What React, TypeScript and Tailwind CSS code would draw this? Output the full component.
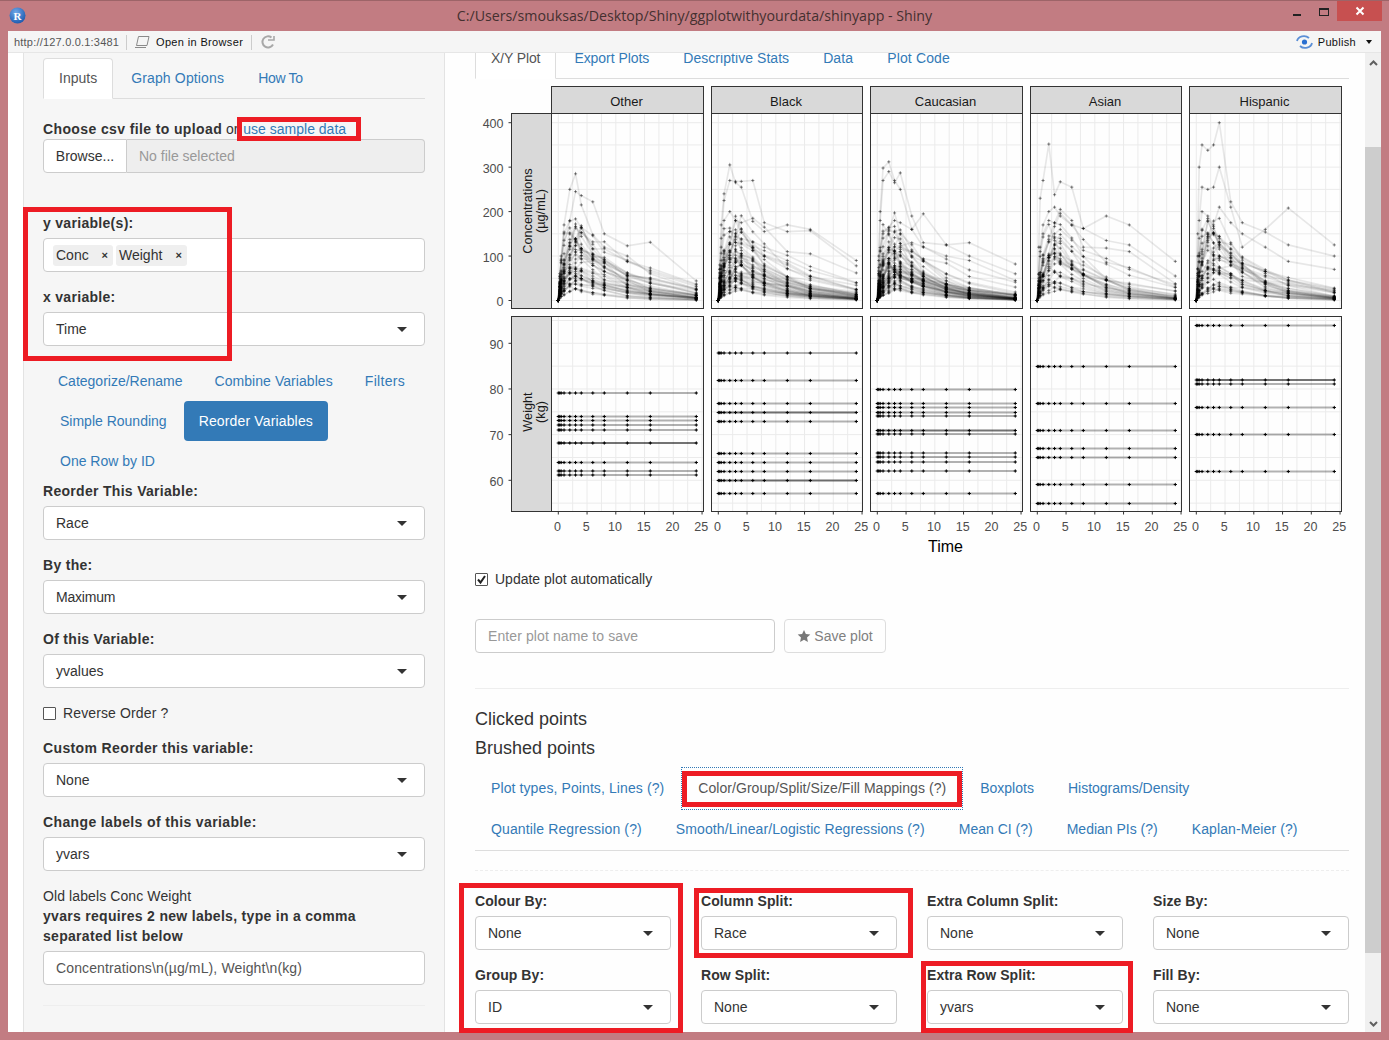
import React, { useMemo } from "react";

const T = [0, 0.25, 0.5, 1, 2, 3, 4, 6, 8, 12, 16, 24];

type PanelDef = {
  name: string;
  left: number;
  right: number;
  x0: number;
  n: number;
  seed: number;
  outliers: number[][];
  weights: [number, boolean][];
};

const PANELS: PanelDef[] = [
  {
    name: "Other", left: 551.5, right: 703.5, x0: 558.3, n: 38, seed: 11,
    outliers: [
      [0, 50, 100, 170, 250, 285, 215, 148, 120, 100, 60, 25],
      [0, 40, 90, 150, 180, 245, 236, 222, 150, 123, 131, 44],
    ],
    weights: [[393, false], [416.5, false], [420.5, false], [425, false], [430, false], [443, true], [462.5, false], [471, false], [475, false]],
  },
  {
    name: "Black", left: 711.5, right: 862.5, x0: 718.3, n: 46, seed: 23,
    outliers: [
      [0, 80, 170, 240, 305, 265, 255, 178, 155, 170, 160, 90],
      [0, 70, 140, 225, 270, 268, 268, 270, 175, 155, 157, 78],
      [0, 60, 120, 180, 200, 180, 175, 185, 165, 110, 105, 62],
    ],
    weights: [[353, false], [380.5, false], [403.5, false], [412.5, true], [421.5, false], [453.5, false], [462.5, false], [471.5, false], [480.5, true], [493.5, false]],
  },
  {
    name: "Caucasian", left: 870.5, right: 1022.5, x0: 877.3, n: 52, seed: 37,
    outliers: [
      [0, 100, 200, 298, 312, 270, 250, 160, 120, 100, 90, 45],
      [0, 90, 180, 270, 290, 265, 287, 190, 130, 125, 130, 82],
      [0, 60, 110, 150, 165, 180, 175, 160, 195, 125, 100, 60],
    ],
    weights: [[389.5, false], [403.5, false], [407.5, false], [412.5, false], [416, false], [430.5, true], [434, false], [453, false], [457, false], [462, false], [471, false], [493.5, false]],
  },
  {
    name: "Asian", left: 1030.5, right: 1181.5, x0: 1037.3, n: 28, seed: 41,
    outliers: [
      [0, 120, 230, 270, 352, 238, 267, 255, 162, 135, 125, 55],
      [0, 60, 120, 170, 200, 210, 190, 170, 162, 190, 170, 88],
      [0, 50, 110, 150, 180, 175, 205, 180, 120, 118, 110, 38],
    ],
    weights: [[366.5, false], [403.5, false], [430.5, false], [448.5, false], [457.5, false], [484.5, false], [503.5, false]],
  },
  {
    name: "Hispanic", left: 1189.5, right: 1341.5, x0: 1196.3, n: 32, seed: 59,
    outliers: [
      [0, 150, 300, 350, 338, 350, 400, 222, 175, 154, 125, 100],
      [0, 100, 180, 255, 250, 255, 300, 210, 120, 160, 208, 125],
      [0, 70, 140, 200, 190, 170, 210, 175, 150, 120, 88, 70],
    ],
    weights: [[325.5, false], [380, true], [384, false], [407.5, false], [434.5, false], [471.5, false]],
  },
];

function rng(seed: number) {
  let s = seed * 99991;
  return () => {
    s = (s + 0x6d2b79f5) | 0;
    let t = Math.imul(s ^ (s >>> 15), 1 | s);
    t = (t + Math.imul(t ^ (t >>> 7), 61 | t)) ^ t;
    return ((t ^ (t >>> 14)) >>> 0) / 4294967296;
  };
}

const yConc = (v: number) => 300.5 - v * 0.4445;

function curves(p: PanelDef) {
  const r = rng(p.seed);
  const out: number[][] = [...p.outliers];
  for (let i = 0; i < p.n; i++) {
    const peak = 25 + Math.pow(r(), 1.2) * 165;
    const tmax = 1 + r() * 3.5;
    const k = 0.06 + r() * 0.11;
    const c = T.map((t) => {
      if (t === 0) return 0;
      const rise = t < tmax ? Math.pow(t / tmax, 0.6) : Math.exp(-k * (t - tmax));
      return peak * rise * (0.88 + r() * 0.24);
    });
    out.push(c);
  }
  return out;
}

function Plot() {
  const data = useMemo(() => PANELS.map(curves), []);
  const xTicks = [0, 5, 10, 15, 20, 25];
  const gridStroke = "#ebebeb";
  const rows = [
    { top: 113.5, bottom: 308.5 },
    { top: 316.5, bottom: 511.5 },
  ];
  const concMajor = [0, 100, 200, 300, 400];
  const concAll = [0, 50, 100, 150, 200, 250, 300, 350, 400];
  const wY = (w: number) => 343.3 + (90 - w) * 4.567;
  const weightAll = [55, 60, 65, 70, 75, 80, 85, 90, 95];
  const weightMajor = [60, 70, 80, 90];
  const plus = (x: number, y: number) => `M${x - 1.6} ${y}h3.2M${x} ${y - 1.6}v3.2`;

  return (
    <svg viewBox="475 85 874 475" width={874} height={475} className="block" fontFamily="'Liberation Sans', sans-serif">
      {/* left strips */}
      {rows.map((r, i) => (
        <rect key={i} x={511.5} y={r.top} width={40} height={r.bottom - r.top} fill="#d9d9d9" stroke="#333" strokeWidth={1} />
      ))}
      <text transform="translate(532 211) rotate(-90)" textAnchor="middle" fontSize={12.7} fill="#1a1a1a">
        <tspan x={0} y={0}>Concentrations</tspan>
        <tspan x={0} y={13}>(µg/mL)</tspan>
      </text>
      <text transform="translate(532 412) rotate(-90)" textAnchor="middle" fontSize={12.7} fill="#1a1a1a">
        <tspan x={0} y={0}>Weight</tspan>
        <tspan x={0} y={13}>(kg)</tspan>
      </text>
      {/* y ticks */}
      {concMajor.map((v) => (
        <g key={v}>
          <line x1={508.5} x2={511} y1={yConc(v)} y2={yConc(v)} stroke="#333" />
          <text x={503.5} y={yConc(v) + 5.5} textAnchor="end" fontSize={12.5} fill="#4d4d4d">{v}</text>
        </g>
      ))}
      {weightMajor.map((v) => (
        <g key={v}>
          <line x1={508.5} x2={511} y1={wY(v)} y2={wY(v)} stroke="#333" />
          <text x={503.5} y={wY(v) + 5.5} textAnchor="end" fontSize={12.5} fill="#4d4d4d">{v}</text>
        </g>
      ))}
      {PANELS.map((p, pi) => {
        const sx = (t: number) => p.x0 + t * 5.75;
        const grid = [0, 2.5, 5, 7.5, 10, 12.5, 15, 17.5, 20, 22.5, 25].filter((t) => sx(t) < p.right);
        const lines = data[pi];
        const pointPath = lines
          .map((c) => c.map((v, i) => plus(sx(T[i]), yConc(v))).join(""))
          .join("");
        return (
          <g key={p.name}>
            {/* top strip */}
            <rect x={p.left} y={86.5} width={p.right - p.left} height={27} fill="#d9d9d9" stroke="#333" />
            <text x={(p.left + p.right) / 2 - 1} y={105.5} textAnchor="middle" fontSize={13} fill="#1a1a1a">{p.name}</text>
            {/* grid row 1 */}
            {grid.map((t) => (
              <line key={t} x1={sx(t)} x2={sx(t)} y1={rows[0].top} y2={rows[0].bottom} stroke={gridStroke} />
            ))}
            {concAll.map((v) => (
              <line key={v} x1={p.left} x2={p.right} y1={yConc(v)} y2={yConc(v)} stroke={gridStroke} />
            ))}
            {lines.map((c, i) => (
              <polyline
                key={i}
                points={c.map((v, j) => `${sx(T[j])},${yConc(v)}`).join(" ")}
                fill="none"
                stroke="#000"
                strokeOpacity={0.09}
                strokeWidth={1.7}
              />
            ))}
            <path d={pointPath} stroke="#000" strokeOpacity={0.55} strokeWidth={0.8} fill="none" />
            <rect x={p.left} y={rows[0].top} width={p.right - p.left} height={rows[0].bottom - rows[0].top} fill="none" stroke="#333" />
            {/* grid row 2 */}
            {grid.map((t) => (
              <line key={t} x1={sx(t)} x2={sx(t)} y1={rows[1].top} y2={rows[1].bottom} stroke={gridStroke} />
            ))}
            {weightAll.map((v) => (
              <line key={v} x1={p.left} x2={p.right} y1={wY(v)} y2={wY(v)} stroke={gridStroke} />
            ))}
            {p.weights.map(([y, dark], i) => (
              <g key={i}>
                <line x1={sx(0)} x2={sx(24)} y1={y} y2={y} stroke="#000" strokeOpacity={dark ? 0.55 : 0.3} strokeWidth={2} />
                <path d={T.map((t) => plus(sx(t), y)).join("")} stroke="#000" strokeWidth={1} fill="none" />
              </g>
            ))}
            <rect x={p.left} y={rows[1].top} width={p.right - p.left} height={rows[1].bottom - rows[1].top} fill="none" stroke="#333" />
            {/* x ticks */}
            {xTicks.map((t) => (
              <g key={t}>
                <line x1={sx(t)} x2={sx(t)} y1={511.5} y2={514.5} stroke="#333" />
                <text x={sx(t) - 0.8} y={530.5} textAnchor="middle" fontSize={12.5} fill="#4d4d4d">{t}</text>
              </g>
            ))}
          </g>
        );
      })}
      <text x={945.5} y={552} textAnchor="middle" fontSize={16} fill="#000">Time</text>
    </svg>
  );
}

function Caret() {
  return <span className="w-0 h-0 border-x-[5.5px] border-x-transparent border-t-[5.5px] border-t-[#333]" />;
}

function Select({ value, valueClass = "" }: { value: string; valueClass?: string }) {
  return (
    <div className="h-[34px] bg-white border border-[#ccc] rounded-[4px] flex items-center justify-between pl-[12px] pr-[17px] text-[#333] text-[14px]">
      <span className={valueClass}>{value}</span>
      <Caret />
    </div>
  );
}

function Label({ children, labelClass = "tracking-[0.3px]" }: { children: React.ReactNode; labelClass?: string }) {
  return <div className={"h-[20px] leading-[20px] mb-[5px] font-bold text-[#333] text-[14px] whitespace-nowrap " + labelClass}>{children}</div>;
}

function Field({ label, value, labelClass, valueClass }: { label: string; value: string; labelClass?: string; valueClass?: string }) {
  return (
    <div className="mb-[15px]">
      <Label labelClass={labelClass}>{label}</Label>
      <Select value={value} valueClass={valueClass} />
    </div>
  );
}

function Tab({ children, active, outline, className = "" }: { children: React.ReactNode; active?: boolean; outline?: boolean; className?: string }) {
  return (
    <div
      className={
        "h-[41px] mr-[2px] px-[15px] border leading-[39px] whitespace-nowrap text-[14px] " +
        (active ? "border-[#ddd] border-b-white bg-white text-[#555] rounded-t-[4px] " : "border-transparent text-[#337ab7] ") +
        (outline ? "outline outline-1 outline-dotted outline-[#337ab7] " : "") +
        className
      }
    >
      {children}
    </div>
  );
}

function Pill({ children, active, className = "" }: { children: React.ReactNode; active?: boolean; className?: string }) {
  return (
    <div
      className={
        "h-[40px] px-[15px] leading-[40px] rounded-[4px] whitespace-nowrap text-[14px] [&:not(:first-child)]:ml-[2px] " +
        (active ? "bg-[#337ab7] text-white " : "text-[#337ab7] ") +
        className
      }
    >
      {children}
    </div>
  );
}

function Box({ className }: { className: string }) {
  return <div className={"absolute border-[5px] border-[#ed1c24] pointer-events-none " + className} />;
}

function Chip({ text, wClass }: { text: string; wClass: string }) {
  return (
    <span className={"h-[21px] bg-[#efefef] rounded-[3px] pl-[3px] flex items-center justify-between pr-[5px] text-[#333] " + wClass}>
      <span>{text}</span>
      <span className="text-[11px] font-bold leading-none">×</span>
    </span>
  );
}

function Sidebar() {
  return (
    <aside className="w-[422px] h-full shrink-0 bg-[#f6f6f6] border-x border-[#e3e3e3] px-[19px] pt-[5px] overflow-hidden">
      <div className="flex border-b border-[#ddd] h-[41px]">
        <Tab active>Inputs</Tab>
        <Tab className="tracking-[0.15px]">Graph Options</Tab>
        <Tab className="tracking-[-0.3px]">How To</Tab>
      </div>
      <div className="mt-[20px] h-[20px] leading-[20px] text-[14px] whitespace-nowrap">
        <span className="font-bold text-[#333] tracking-[0.38px]">Choose csv file to upload</span>
        <span className="text-[#333]"> or </span>
        <span className="text-[#337ab7] ml-[1px]">use sample data</span>
      </div>
      <div className="h-[34px] flex text-[14px]">
        <div className="w-[84px] bg-white border border-[#ccc] rounded-l-[4px] flex items-center justify-center text-[#333]">Browse...</div>
        <div className="flex-1 bg-[#eee] border border-l-0 border-[#ccc] rounded-r-[4px] flex items-center pl-[12px] text-[#999]">No file selected</div>
      </div>
      <div className="mt-[40px] mb-[15px]">
        <Label>y variable(s):</Label>
        <div className="h-[34px] bg-white border border-[#ccc] rounded-[4px] flex items-center gap-[3px] pl-[9px] text-[14px]">
          <Chip text="Conc" wClass="w-[60px]" />
          <Chip text="Weight" wClass="w-[71px]" />
        </div>
      </div>
      <Field label="x variable:" value="Time" />
      <div className="flex flex-wrap">
        <Pill>Categorize/Rename</Pill>
        <Pill className="tracking-[0.06px]">Combine Variables</Pill>
        <Pill className="tracking-[0.3px]">Filters</Pill>
        <Pill>Simple Rounding</Pill>
        <Pill active className="tracking-[0.15px]">Reorder Variables</Pill>
        <Pill>One Row by ID</Pill>
      </div>
      <Field label="Reorder This Variable:" value="Race" />
      <Field label="By the:" value="Maximum" valueClass="tracking-[-0.2px]" />
      <Field label="Of this Variable:" value="yvalues" />
      <div className="h-[20px] flex items-center gap-[7px] text-[14px] text-[#333] mb-[15px]">
        <span className="w-[13px] h-[13px] bg-white border border-[#555] rounded-[1px]" />
        <span className="tracking-[0.13px]">Reverse Order ?</span>
      </div>
      <Field label="Custom Reorder this variable:" value="None" labelClass="tracking-[0.37px]" />
      <Field label="Change labels of this variable:" value="yvars" labelClass="tracking-[0.37px]" />
      <div className="text-[14px] leading-[20px] text-[#333] tracking-[0.1px]">Old labels Conc Weight</div>
      <div className="text-[14px] leading-[20px] text-[#333] font-bold tracking-[0.3px] mb-[5px]">
        yvars requires 2 new labels, type in a comma
        <br />
        separated list below
      </div>
      <div className="h-[34px] bg-white border border-[#ccc] rounded-[4px] flex items-center pl-[12px] text-[14px] text-[#555] tracking-[0.13px]">
        Concentrations\n(µg/mL), Weight\n(kg)
      </div>
      <div className="mt-[20px] border-t border-[#eee]" />
    </aside>
  );
}

function Main() {
  const lc = "tracking-[0.08px]";
  return (
    <main className="flex-1 min-w-0 h-full overflow-hidden bg-[#fefefe] pl-[30px] pr-[16px]">
      <div className="-mt-[15px]">
        <div className="flex border-b border-[#ddd] h-[41px]">
          <Tab active className="tracking-[-0.12px]">X/Y Plot</Tab>
          <Tab className="tracking-[-0.05px]">Export Plots</Tab>
          <Tab className="tracking-[0.05px]">Descriptive Stats</Tab>
          <Tab className="tracking-[0.1px]">Data</Tab>
          <Tab className="tracking-[0.15px]">Plot Code</Tab>
        </div>
        <div className="mt-[6px]">
          <Plot />
        </div>
        <div className="mt-[9px] h-[20px] flex items-center gap-[7px] text-[14px] text-[#333]">
          <span className="w-[13px] h-[13px] bg-white border border-[#555] rounded-[1px] flex items-center justify-center">
            <svg width="11" height="11" viewBox="0 0 11 11">
              <path d="M2 5.5 L4.5 8.5 L9 2" fill="none" stroke="#222" strokeWidth="2" />
            </svg>
          </span>
          <span>Update plot automatically</span>
        </div>
        <div className="mt-[30px] flex gap-[9px] text-[14px]">
          <div className="w-[300px] h-[34px] bg-white border border-[#ccc] rounded-[4px] flex items-center pl-[12px] text-[#999] tracking-[0.1px]">Enter plot name to save</div>
          <div className="w-[102px] h-[34px] border border-[#ddd] rounded-[4px] flex items-center justify-center gap-[3px] text-[#808080]">
            <svg width="14" height="14" viewBox="0 0 24 24" fill="#777">
              <path d="M12 1.5l3.2 7 7.6.9-5.6 5.2 1.5 7.6L12 18.4l-6.7 3.8 1.5-7.6L1.2 9.4l7.6-.9z" />
            </svg>
            <span>Save plot</span>
          </div>
        </div>
        <div className="mt-[35px] border-t border-[#eee]" />
        <div className="mt-[20px] h-[20px] leading-[20px] text-[18px] text-[#333]">Clicked points</div>
        <div className="mt-[9px] h-[20px] leading-[20px] text-[18px] text-[#333]">Brushed points</div>
        <div className="mt-[10px] flex flex-wrap border-b border-[#ddd] h-[83px]">
          <Tab className="tracking-[0.1px]">Plot types, Points, Lines (?)</Tab>
          <Tab outline className="tracking-[0.05px]">
            <span className="text-[#555]">Color/Group/Split/Size/Fill Mappings (?)</span>
          </Tab>
          <Tab>Boxplots</Tab>
          <Tab>Histograms/Density</Tab>
          <Tab className="tracking-[0.13px]">Quantile Regression (?)</Tab>
          <Tab className="tracking-[0.1px]">Smooth/Linear/Logistic Regressions (?)</Tab>
          <Tab>Mean CI (?)</Tab>
          <Tab>Median PIs (?)</Tab>
          <Tab className="tracking-[0.1px]">Kaplan-Meier (?)</Tab>
        </div>
        <div className="mt-[19px] border-t border-dashed border-[#eee]" />
        <div className="mt-[20px] grid grid-cols-4 gap-x-[30px]">
          <Field labelClass={lc} label="Colour By:" value="None" />
          <Field labelClass={lc} label="Column Split:" value="Race" />
          <Field labelClass={lc} label="Extra Column Split:" value="None" />
          <Field labelClass={lc} label="Size By:" value="None" />
          <Field labelClass={lc} label="Group By:" value="ID" />
          <Field labelClass={lc} label="Row Split:" value="None" />
          <Field labelClass={lc} label="Extra Row Split:" value="yvars" />
          <Field labelClass={lc} label="Fill By:" value="None" />
        </div>
      </div>
    </main>
  );
}

function Scrollbar() {
  return (
    <div className="w-[16px] h-full shrink-0 bg-[#f0f0f0] flex flex-col items-center">
      <div className="h-[94px] w-full flex justify-center pt-[7px]">
        <svg width="9" height="6" viewBox="0 0 9 6">
          <path d="M1 5 L4.5 1.5 L8 5" fill="none" stroke="#606060" strokeWidth="2" />
        </svg>
      </div>
      <div className="h-[806px] w-full bg-[#cdcdcd]" />
      <div className="flex-1 w-full flex justify-center items-end pb-[5px]">
        <svg width="9" height="6" viewBox="0 0 9 6">
          <path d="M1 1 L4.5 4.5 L8 1" fill="none" stroke="#606060" strokeWidth="2" />
        </svg>
      </div>
    </div>
  );
}

function TitleBar() {
  return (
    <div className="relative h-[31px] shrink-0 border-t border-[#9d6468] flex items-center">
      <svg width="17" height="17" viewBox="0 0 17 17" className="ml-[9px] -mt-[1px]">
        <defs>
          <radialGradient id="rg" cx="40%" cy="30%" r="75%">
            <stop offset="0%" stopColor="#6fa8e8" />
            <stop offset="100%" stopColor="#1a57ad" />
          </radialGradient>
        </defs>
        <circle cx="8.5" cy="8.5" r="8" fill="url(#rg)" />
        <text x="8.5" y="12.5" textAnchor="middle" fontSize="11" fontWeight="bold" fill="#fff" fontFamily="'Liberation Serif', serif">R</text>
      </svg>
      <div className="absolute inset-x-0 top-[5px] text-center text-[14.2px] leading-[20px] text-[#443030] font-['Open_Sans',sans-serif]">
        C:/Users/smouksas/Desktop/Shiny/ggplotwithyourdata/shinyapp - Shiny
      </div>
      <div className="ml-auto flex items-start h-full mr-[7px]">
        <div className="w-[8px] h-[2px] bg-[#222] mt-[13px] mr-[18px]" />
        <div className="w-[10px] h-[8px] border border-t-2 border-[#222] mt-[7px] mr-[8px]" />
        <div className="w-[45px] h-[20px] bg-[#c75050] flex items-center justify-center">
          <svg width="10" height="10" viewBox="0 0 10 10">
            <path d="M1.5 1.5 L8.5 8.5 M8.5 1.5 L1.5 8.5" stroke="#fff" strokeWidth="2" />
          </svg>
        </div>
      </div>
    </div>
  );
}

function Toolbar() {
  return (
    <div className="h-[22px] shrink-0 bg-[#f5f5f5] border-b border-[#e6e6e6] flex items-center pt-[1px] text-[11px] whitespace-nowrap">
      <span className="ml-[6px] text-[#555] tracking-[0.2px] w-[105px]">http://127.0.0.1:3481</span>
      <span className="w-px h-[15px] bg-[#ccc] ml-[7px]" />
      <svg width="17" height="14" viewBox="0 0 17 14" className="ml-[7px]">
        <path d="M4.5 1.5 H15 L13 10.5 H2.5 Z M1 12.5 H12" fill="none" stroke="#8a8a8a" strokeWidth="1" />
      </svg>
      <span className="ml-[5px] text-[#111] tracking-[0.35px]">Open in Browser</span>
      <span className="w-px h-[15px] bg-[#ccc] ml-[8px]" />
      <svg width="16" height="16" viewBox="0 0 16 16" className="ml-[8px]">
        <path d="M13 10.5 A5.6 5.6 0 1 1 11.5 3.5" fill="none" stroke="#a8a8a8" strokeWidth="2" />
        <path d="M8 6 H14 V2" fill="none" stroke="#a8a8a8" strokeWidth="1.6" />
      </svg>
      <svg width="17" height="14" viewBox="0 0 17 14" className="ml-auto">
        <circle cx="8.5" cy="7" r="2.6" fill="#2a6fd0" />
        <path d="M1 6 A7 6 0 0 1 13 3" fill="none" stroke="#5b8fd6" strokeWidth="1.8" />
        <path d="M16 8 A7 6 0 0 1 4 11" fill="none" stroke="#5b8fd6" strokeWidth="1.8" />
      </svg>
      <span className="ml-[5px] text-[#111] tracking-[0.3px]">Publish</span>
      <span className="ml-[10px] mr-[9px] w-0 h-0 border-x-[3px] border-x-transparent border-t-[4px] border-t-[#111]" />
    </div>
  );
}

export default function App() {
  return (
    <div className="relative w-[1389px] h-[1040px] overflow-hidden bg-[#c27c82] font-['Liberation_Sans',sans-serif] flex flex-col">
      <TitleBar />
      <div className="mx-[8px] flex flex-col h-[1001px] shrink-0 bg-white">
        <Toolbar />
        <div className="flex-1 min-h-0 flex">
          <div className="w-[15px] shrink-0 bg-white" />
          <Sidebar />
          <Main />
          <Scrollbar />
        </div>
      </div>
      <div className="flex-1 bg-[#c27c82]" />

      {/* annotation boxes drawn over the page */}
      <Box className="left-[237px] top-[117px] w-[124px] h-[24px]" />
      <Box className="left-[23px] top-[207px] w-[209px] h-[154px]" />
      <Box className="left-[682px] top-[771px] w-[280px] h-[36px]" />
      <Box className="left-[459px] top-[883px] w-[224px] h-[150px]" />
      <Box className="left-[694px] top-[888px] w-[219px] h-[70px]" />
      <Box className="left-[921px] top-[961px] w-[212px] h-[72px]" />
    </div>
  );
}
